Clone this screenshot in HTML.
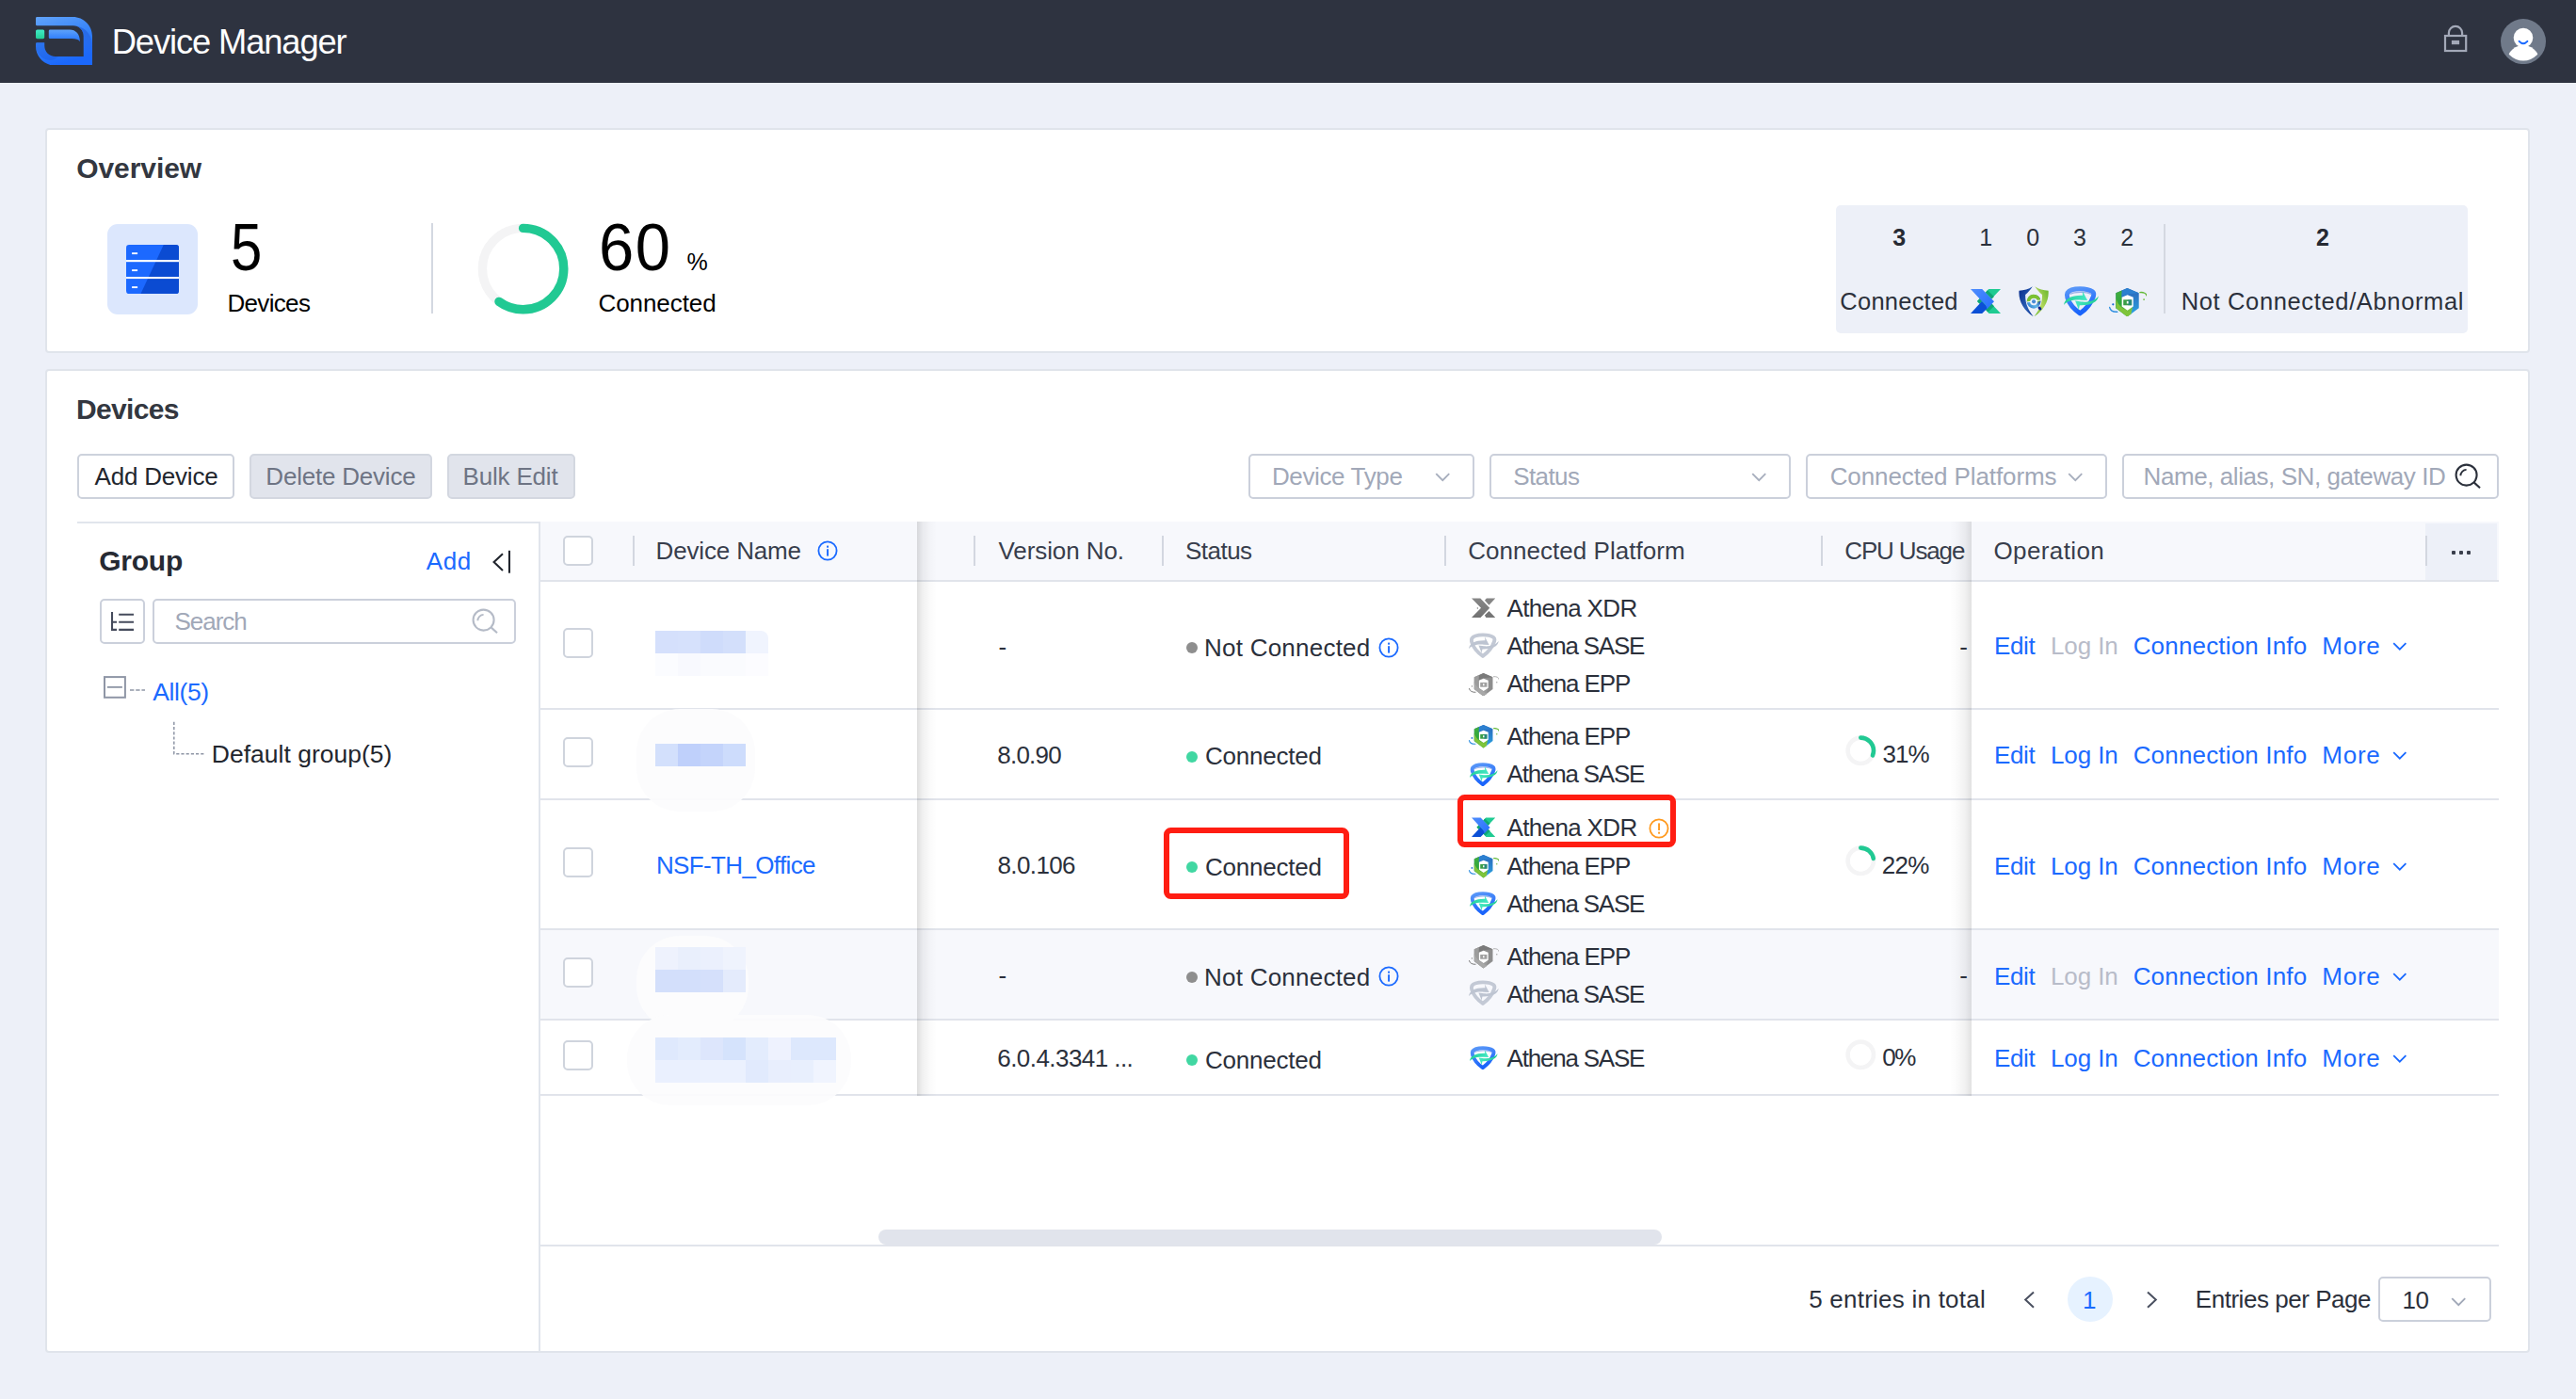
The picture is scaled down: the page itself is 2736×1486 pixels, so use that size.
<!DOCTYPE html><html lang="en"><head><meta charset="utf-8"><title>Device Manager</title><style>
*{box-sizing:border-box;margin:0;padding:0}
html,body{width:2736px;height:1486px;overflow:hidden;background:#edf0f8;font-family:"Liberation Sans",sans-serif;}
.abs,.t,svg.i{position:absolute}
.t{white-space:pre;line-height:1;display:block}
.hdr{left:0;top:0;width:2736px;height:88px;background:#2e3340}
.card{background:#fff;border:2px solid #e0e4eb;border-radius:4px}
.btn{border:2px solid #cdd2dc;border-radius:5px;background:#fff}
.btn.dis{background:#e1e4ec;border-color:#d3d7e0}
.inp{border:2px solid #cbd0db;border-radius:5px;background:#fff}
.cb{width:32px;height:32px;border:2px solid #cfd4dd;border-radius:5px;background:#fff}
.sep{width:2px;height:32px;background:#d3d7e0;top:569px}
.hl{height:2px;background:#e1e4eb}
.row{left:574px;width:2080px}
.dot{width:12.4px;height:12.4px;border-radius:50%}
.blk{height:24px}
</style></head><body>
<svg width="0" height="0" style="position:absolute">
<defs>
<linearGradient id="lgLogo" x1="0" y1="0" x2="0.35" y2="1"><stop offset="0" stop-color="#62a4f9"/><stop offset="0.55" stop-color="#3381fa"/><stop offset="1" stop-color="#1b68fc"/></linearGradient>
<linearGradient id="lgLogo2" x1="0" y1="0" x2="0" y2="1"><stop offset="0" stop-color="#5ea2fb"/><stop offset="1" stop-color="#2273fd"/></linearGradient>
<linearGradient id="lgShade" x1="0" y1="0" x2="0" y2="1"><stop offset="0" stop-color="#1a50cf" stop-opacity=".55"/><stop offset="1" stop-color="#1a50cf" stop-opacity="0"/></linearGradient>
<linearGradient id="lgGreen" x1="0" y1="0" x2="0" y2="1"><stop offset="0" stop-color="#42ebc8"/><stop offset="1" stop-color="#22cf97"/></linearGradient>
<linearGradient id="xdrB" x1="0" y1="0" x2="1" y2="1"><stop offset="0" stop-color="#4f8dfd"/><stop offset="1" stop-color="#256ffe"/></linearGradient>
<linearGradient id="shL" x1="0" y1="0" x2="1" y2="1"><stop offset="0" stop-color="#06298a"/><stop offset="0.6" stop-color="#2a5fb4"/><stop offset="1" stop-color="#0a2f8f"/></linearGradient>
<linearGradient id="shR" x1="1" y1="0" x2="0" y2="1"><stop offset="0" stop-color="#62b428"/><stop offset="0.55" stop-color="#b2d75c"/><stop offset="1" stop-color="#6cb82c"/></linearGradient>
<linearGradient id="eyeB" x1="0" y1="1" x2="1" y2="0"><stop offset="0" stop-color="#2f7fd0"/><stop offset="0.4" stop-color="#64b8e8"/><stop offset="1" stop-color="#08208a"/></linearGradient>
<linearGradient id="saseB" x1="0" y1="0" x2="0.3" y2="1"><stop offset="0" stop-color="#5a98f8"/><stop offset="1" stop-color="#1a64fb"/></linearGradient>
<linearGradient id="saseG" x1="0" y1="0" x2="1" y2="0"><stop offset="0" stop-color="#22cf97"/><stop offset="1" stop-color="#45e8c6"/></linearGradient>
<linearGradient id="saseG2" x1="1" y1="0" x2="0" y2="0"><stop offset="0" stop-color="#1fcb92"/><stop offset="1" stop-color="#45e8c6"/></linearGradient>
<linearGradient id="eppG" x1="0" y1="0" x2="0.6" y2="1"><stop offset="0" stop-color="#46b03c"/><stop offset="0.5" stop-color="#2fa540"/><stop offset="1" stop-color="#84c63b"/></linearGradient>
<linearGradient id="eppB" x1="0" y1="0" x2="0" y2="1"><stop offset="0" stop-color="#2c63b8"/><stop offset="1" stop-color="#2aa8e4"/></linearGradient>
<linearGradient id="xg" x1="0" y1="0" x2="0" y2="1"><stop offset="0" stop-color="#878787"/><stop offset="1" stop-color="#727272"/></linearGradient>
<linearGradient id="eppGy" x1="0" y1="0" x2="0.6" y2="1"><stop offset="0" stop-color="#9a9a9a"/><stop offset="1" stop-color="#8a8a8a"/></linearGradient>

<symbol id="xdr" viewBox="0 0 32 26">
 <path d="M32 0H19.2L7 13.1 19.6 26H32L19.8 13z" fill="#1fcb92"/>
 <path d="M18 1.3L15.9 3.6 22.6 10.4 24.9 7.9zM7 13.1L9.4 15.6 12.4 12.6 9.8 10zM16 21.4L18.4 24.6 25 18.2 22.4 15.6z" fill="#11a676"/>
 <path d="M12 13.1L0 26H12.2L18.4 19.8z" fill="#0b4fd6"/>
 <path d="M0 0H12.2L25 13.3 17.3 21.2C17 18 15 15.6 12 13.1z" fill="url(#xdrB)"/>
</symbol>
<symbol id="xdrg" viewBox="0 0 32 26">
 <path d="M0 0H11.8L24.4 13 12.1 26H0L12.7 13z" fill="url(#xg)"/>
 <path d="M20.2 0.2H32L23.5 9.2 17.7 2.9z" fill="#858585"/>
 <path d="M23.5 17.3L32 26H19.5L17.7 23z" fill="#757575"/>
 <circle cx="8.1" cy="13.3" r="0.9" fill="#7a7a7a"/>
</symbol>

<symbol id="eye" viewBox="0 0 32 33">
 <path d="M14.7 0.2C10.5 3.2 5.5 4.3 0.3 4.8-0.6 16 5.5 26 15.6 32.4 10.2 25.4 6.8 19 7 9 9.8 6.6 12.6 3.8 14.7 0.2z" fill="url(#shL)"/>
 <path d="M17.2 0.2C21.4 3.2 26.4 4.3 31.6 4.8 32.5 16 26.4 26 16.4 32.4 21.8 25.4 25.2 19 25 9 22.2 6.6 19.4 3.8 17.2 0.2z" fill="url(#shR)"/>
 <circle cx="16" cy="16.4" r="5.7" fill="none" stroke="url(#eyeB)" stroke-width="3.4"/>
 <path d="M8.6 16.9A7.4 7.4 0 0 1 23.3 15.2L20.2 17.6A4 4 0 0 0 12 16.4z" fill="#7cc230"/>
 <path d="M8.6 17L23.6 15" stroke="#fff" stroke-width="0.9"/>
 <circle cx="16" cy="16.4" r="2.1" fill="#4a8cd6"/>
 <path d="M21.9 23L22.9 24.3" stroke="#07208c" stroke-width="2.8" stroke-linecap="round"/>
</symbol>

<symbol id="sase" viewBox="0 0 38 32">
 <path d="M17.6 2.6C10.5 2.6 5.6 4.4 3.9 7 3.2 8.4 3.3 10.2 3.9 12.2 5.9 18.6 11.6 25 17.5 29 22.8 25.2 29.2 18.4 31.7 10.8 32.4 8.6 32.3 6.8 30.8 5.7 27.8 3.6 23.4 2.6 17.6 2.6z" fill="none" stroke="url(#saseB)" stroke-width="5" stroke-linejoin="round"/>
 <path d="M6.6 8.4C11 5.6 24.6 5.4 29.4 8.6" fill="none" stroke="#1d4fd0" stroke-width="1.3" opacity=".4"/>
 <path d="M0.2 20C0.2 13.2 9 9.2 20.4 9.6L20 5.2 25.4 15 18.8 14.8C11 14 3.4 15.6 0.2 20z" fill="url(#saseG)"/>
 <path d="M37.2 10.4C36.4 17.4 27.8 20.6 17 20.2L16 25 12.2 15.6 18.8 16.6C27.4 17.2 33.6 15.2 37.2 10.4z" fill="url(#saseG2)"/>
</symbol>
<symbol id="saseg" viewBox="0 0 38 32">
 <path d="M17.6 2.6C10.5 2.6 5.6 4.4 3.9 7 3.2 8.4 3.3 10.2 3.9 12.2 5.9 18.6 11.6 25 17.5 29 22.8 25.2 29.2 18.4 31.7 10.8 32.4 8.6 32.3 6.8 30.8 5.7 27.8 3.6 23.4 2.6 17.6 2.6z" fill="none" stroke="#c3c9d5" stroke-width="4.6" stroke-linejoin="round"/>
 <path d="M0.2 20C0.2 13.2 9 9.2 20.4 9.6L20 5.2 25.4 15 18.8 14.8C11 14 3.4 15.6 0.2 20z" fill="#bdc4d1"/>
 <path d="M37.2 10.4C36.4 17.4 27.8 20.6 17 20.2L16 25 12.2 15.6 18.8 16.6C27.4 17.2 33.6 15.2 37.2 10.4z" fill="#bdc4d1"/>
</symbol>

<symbol id="epp" viewBox="0 0 40 31">
 <path d="M19.2 0L7 5.4V21.4L19.2 30.6 31.6 21.4V5.4z" fill="url(#eppB)"/>
 <path d="M19.2 0L13 2.8 11.6 9.4 19.4 6.6 31.6 5.4z" fill="#2c80d0"/>
 <path d="M13.4 2.6L7 5.4V21.4L19.2 30.6 23.2 27.6 25 19.6 13 9.6z" fill="url(#eppG)"/>
 <path d="M7 11L7.2 21.4 19.2 30.6 23.4 27.4 18.4 23.6C12 21 8.6 15.8 7 11z" fill="#7fc43a"/>
 <path d="M19.4 7.2L13.4 9.8V19.6L19.4 23.8 25.6 19.6V9.8z" fill="#fff"/>
 <rect x="15" y="12.4" width="9" height="6" fill="#3a9e46"/>
 <rect x="20" y="12.4" width="4" height="6" fill="#1f7f8e" opacity=".7"/>
 <rect x="18.6" y="14" width="1.8" height="2.6" fill="#fff"/>
 <path d="M0.3 20.6C1 24 4.6 25.6 8.6 25.4" fill="none" stroke="#2f8fe0" stroke-width="1.3" stroke-linecap="round"/>
 <circle cx="4" cy="17.4" r="1.1" fill="#1565d8"/>
 <path d="M32.8 4.6C36.6 4.2 39.6 5.6 39.8 8" fill="none" stroke="#62b835" stroke-width="1.3" stroke-linecap="round"/>
 <circle cx="37" cy="12.2" r="0.9" fill="#6cbb3a"/>
</symbol>
<symbol id="eppg" viewBox="0 0 40 31">
 <path d="M19.2 0L7 5.4V21.4L19.2 30.6 31.6 21.4V5.4z" fill="#8e8e8e"/>
 <path d="M19.2 0L13 2.8 11.6 9.4 19.4 6.6 31.6 5.4z" fill="#7a7a7a"/>
 <path d="M13.4 2.6L7 5.4V21.4L19.2 30.6 23.2 27.6 25 19.6 13 9.6z" fill="#9c9c9c"/>
 <path d="M7 11L7.2 21.4 19.2 30.6 23.4 27.4 18.4 23.6C12 21 8.6 15.8 7 11z" fill="#a8a8a8"/>
 <path d="M19.4 7.2L13.4 9.8V19.6L19.4 23.8 25.6 19.6V9.8z" fill="#fff"/>
 <rect x="15" y="12.4" width="9" height="6" fill="#a0a0a0"/>
 <rect x="18.6" y="14" width="1.8" height="2.6" fill="#fff"/>
 <path d="M0.3 20.6C1 24 4.6 25.6 8.6 25.4" fill="none" stroke="#6b6b6b" stroke-width="1.1" stroke-linecap="round"/>
 <circle cx="4" cy="17.4" r="0.8" fill="#777"/>
 <path d="M32.8 4.6C36.6 4.2 39.6 5.6 39.8 8" fill="none" stroke="#aaa" stroke-width="1.1" stroke-linecap="round"/>
 <circle cx="37" cy="12.2" r="0.8" fill="#999"/>
</symbol>

<symbol id="info" viewBox="0 0 22 22">
 <circle cx="11" cy="11" r="9.6" fill="none" stroke="#1b6aff" stroke-width="1.8"/>
 <rect x="10.1" y="9.2" width="1.9" height="7.4" fill="#1b6aff"/><rect x="10.1" y="5.6" width="1.9" height="2.1" fill="#1b6aff"/>
</symbol>
<symbol id="warn" viewBox="0 0 22 22">
 <circle cx="11" cy="11" r="9.6" fill="none" stroke="#ff9a1f" stroke-width="1.8"/>
 <rect x="10.1" y="5.4" width="1.9" height="7.6" fill="#ff9a1f"/><rect x="10.1" y="14.6" width="1.9" height="2.1" fill="#ff9a1f"/>
</symbol>
<symbol id="chev" viewBox="0 0 16 10">
 <path d="M1 1.2L8 8.2 15 1.2" fill="none" stroke="currentColor" stroke-width="1.9"/>
</symbol>
<symbol id="srch" viewBox="0 0 28 28">
 <circle cx="12.6" cy="12.6" r="11" fill="none" stroke="currentColor" stroke-width="2.1"/>
 <path d="M20.6 20.4L27 26.2" stroke="currentColor" stroke-width="2.1"/>
 <path d="M6.4 13.2A6.4 6.4 0 0 1 12.6 6.9" fill="none" stroke="currentColor" stroke-width="1.9"/>
</symbol>
</defs></svg>
<header class="abs hdr">
<svg class="i" style="left:38px;top:17.8px" width="60" height="51.6" viewBox="0 0 60 51.6">
<path d="M1.4 0H39.4C50.8 0 60 9.2 60 20.6V50.2Q60 51.6 58.6 51.6H20.3C9.1 51.6 0 42.5 0 31.3V28.6Q0 27.2 1.4 27.2H9.2V30.7C9.2 36.9 14.2 41.9 20.5 41.9H50.75V20.3C50.75 14.2 45.8 9.3 39.7 9.3H1.4Q0 9.3 0 7.9V1.4Q0 0 1.4 0z" fill="url(#lgLogo)"/>
<path d="M50.75 20.3C50.75 14.2 45.8 9.3 39.7 9.3 50 9.6 58.6 16.4 60 28V42H50.75z" fill="url(#lgShade)"/>
<path d="M0 31.3C0 36 3.4 41.4 9 44.6 13.6 46.8 18 47 24 41.9H20.5C14.2 41.9 9.2 36.9 9.2 30.7V27.2H1.4Q0 27.2 0 28.6z" fill="#1a56d8" opacity=".35"/>
<path d="M15.2 13.6H36C42.4 13.6 46.9 18.2 46.9 26.2 45.2 23.8 42.4 23.1 38.4 23.1H15.2Q13.8 23.1 13.8 21.7V15Q13.8 13.6 15.2 13.6z" fill="url(#lgLogo2)"/>
<rect x="0" y="13.4" width="9.2" height="9.8" rx="1.6" fill="url(#lgGreen)"/>
</svg>
<h1 class="t" style="left:118.72px;top:27.17px;font-size:36.3px;color:#ffffff;font-weight:normal;letter-spacing:-1.102px;">Device Manager</h1>
<svg class="i" style="left:2590px;top:22px" width="36" height="38" viewBox="0 0 36 38">
<rect x="7" y="16" width="22.2" height="16" fill="none" stroke="#a3a9b8" stroke-width="2.2"/>
<path d="M10.9 16V13A7.1 7.1 0 0 1 25.1 13V16" fill="none" stroke="#a3a9b8" stroke-width="2.2"/>
<rect x="13.9" y="20.9" width="8.2" height="4.3" fill="#a3a9b8"/></svg>
<svg class="i" style="left:2656px;top:19.8px" width="48" height="48.2" viewBox="0 0 48 48.2">
<defs><clipPath id="avc"><circle cx="24" cy="24.1" r="20.4"/></clipPath></defs>
<circle cx="24" cy="24.1" r="24" fill="#707a8a"/>
<circle cx="24" cy="20.1" r="10.3" fill="#fff"/>
<path d="M18.6 29.1C14 30.4 10.6 33.8 8 38.4L4 46H44L40 38.4C37.4 33.8 34 30.4 29.4 29.1z" fill="#fff" clip-path="url(#avc)"/>
<path d="M19.6 23.9Q24 28.6 28.4 23.9" fill="none" stroke="#1b6aff" stroke-width="2" stroke-linecap="round"/></svg>
</header>
<section class="abs card" style="left:48px;top:136px;width:2639px;height:239px"></section>
<h2 class="t" style="left:81.27px;top:163.85px;font-size:30px;color:#333740;font-weight:bold;letter-spacing:-0.082px;">Overview</h2>
<div class="abs" style="left:114px;top:238px;width:96px;height:96px;border-radius:11px;background:#dce7fd"></div>
<svg class="i" style="left:134px;top:259.8px" width="56" height="52.2" viewBox="0 0 56 52.2">
<defs><clipPath id="srvc"><rect x="0" y="0" width="56" height="52.2" rx="3.2"/></clipPath></defs>
<g clip-path="url(#srvc)"><rect width="56" height="52.2" fill="#1c69ff"/><path d="M39.8 0H56V52.2H15.4z" fill="#0b4bd2"/>
<rect y="16.1" width="56" height="2.1" fill="#fff"/><rect y="34" width="56" height="2.1" fill="#fff"/></g>
<rect x="6.1" y="8.2" width="6" height="1.9" fill="#fff"/><rect x="6.1" y="26.2" width="6" height="1.9" fill="#fff"/><rect x="6.1" y="44.2" width="6" height="1.9" fill="#fff"/></svg>
<span class="t" style="left:244.59px;top:227.62px;font-size:70.5px;color:#000;transform:scaleX(0.85);transform-origin:0 0;">5</span>
<span class="t" style="left:241.39px;top:309.49px;font-size:26px;color:#000;letter-spacing:-0.661px;">Devices</span>
<div class="abs" style="left:458px;top:237px;width:2px;height:96px;background:#d4d8e1"></div>
<svg class="i" style="left:503.30px;top:233.15px" width="105.2" height="105.2" viewBox="-52.6 -52.6 105.2 105.2"><circle r="43.2" fill="none" stroke="#f4f4f5" stroke-width="9.4"/><circle r="43.2" fill="none" stroke="#21c993" stroke-width="9.4" stroke-linecap="round" stroke-dasharray="162.86 271.43" transform="rotate(-90)"/></svg>
<span class="t" style="left:635.71px;top:227.62px;font-size:70.5px;color:#000;letter-spacing:1.500px;transform:scaleX(0.95);transform-origin:0 0;">60</span>
<span class="t" style="left:729.50px;top:265.84px;font-size:25px;color:#000;">%</span>
<span class="t" style="left:635.49px;top:309.29px;font-size:26px;color:#000;letter-spacing:-0.077px;">Connected</span>
<div class="abs" style="left:1950px;top:218px;width:671px;height:135.5px;border-radius:5px;background:#edf0f8"></div>
<span class="t" style="left:2010.35px;top:240.09px;font-size:25px;color:#262a33;font-weight:bold;">3</span>
<span class="t" style="left:2102.22px;top:240.09px;font-size:25px;color:#2b303b;">1</span>
<span class="t" style="left:2152.26px;top:240.09px;font-size:25px;color:#2b303b;">0</span>
<span class="t" style="left:2201.90px;top:240.09px;font-size:25px;color:#2b303b;">3</span>
<span class="t" style="left:2252.32px;top:240.09px;font-size:25px;color:#2b303b;">2</span>
<span class="t" style="left:2459.88px;top:240.09px;font-size:25px;color:#262a33;font-weight:bold;">2</span>
<span class="t" style="left:1954.36px;top:307.66px;font-size:25.5px;color:#2b303b;letter-spacing:0.226px;">Connected</span>
<svg class="i" style="left:2093.00px;top:307.00px;" width="32" height="26"><use href="#xdr"/></svg>
<svg class="i" style="left:2144.00px;top:303.60px;" width="32.2" height="32.8"><use href="#eye"/></svg>
<svg class="i" style="left:2191.60px;top:304.00px;" width="37.6" height="32"><use href="#sase"/></svg>
<svg class="i" style="left:2239.80px;top:305.60px;" width="40.4" height="30.8"><use href="#epp"/></svg>
<div class="abs" style="left:2298px;top:237.5px;width:2px;height:95px;background:#d4d8e1"></div>
<span class="t" style="left:2316.69px;top:307.66px;font-size:25.5px;color:#2b303b;letter-spacing:0.642px;">Not Connected/Abnormal</span>
<section class="abs card" style="left:48px;top:392px;width:2639px;height:1045px"></section>
<h2 class="t" style="left:81.12px;top:420.11px;font-size:30px;color:#333740;font-weight:bold;letter-spacing:-0.687px;">Devices</h2>
<div class="abs btn" style="left:82px;top:482px;width:167px;height:48px"></div>
<span class="t" style="left:100.51px;top:493.49px;font-size:26px;color:#22262e;letter-spacing:-0.200px;">Add Device</span>
<div class="abs btn dis" style="left:265px;top:482px;width:194px;height:48px"></div>
<span class="t" style="left:282.36px;top:493.49px;font-size:26px;color:#6e7484;letter-spacing:-0.213px;">Delete Device</span>
<div class="abs btn dis" style="left:475px;top:482px;width:136px;height:48px"></div>
<span class="t" style="left:491.57px;top:493.49px;font-size:26px;color:#6e7484;letter-spacing:-0.195px;">Bulk Edit</span>
<div class="abs inp" style="left:1326px;top:482px;width:240px;height:48px"></div>
<span class="t" style="left:1350.88px;top:493.49px;font-size:26px;color:#a1a8b8;letter-spacing:-0.362px;">Device Type</span>
<svg class="i" style="left:1524.00px;top:502.30px;color:#a8afbe" width="16.5" height="10"><use href="#chev"/></svg>
<div class="abs inp" style="left:1582px;top:482px;width:319.5px;height:48px"></div>
<span class="t" style="left:1607.28px;top:493.49px;font-size:26px;color:#a1a8b8;letter-spacing:-0.618px;">Status</span>
<svg class="i" style="left:1860.00px;top:502.30px;color:#a8afbe" width="16.5" height="10"><use href="#chev"/></svg>
<div class="abs inp" style="left:1918px;top:482px;width:319.5px;height:48px"></div>
<span class="t" style="left:1943.68px;top:493.49px;font-size:26px;color:#a1a8b8;letter-spacing:-0.110px;">Connected Platforms</span>
<svg class="i" style="left:2196.00px;top:502.30px;color:#a8afbe" width="16.5" height="10"><use href="#chev"/></svg>
<div class="abs inp" style="left:2254px;top:482px;width:400px;height:48px"></div>
<span class="t" style="left:2276.57px;top:493.49px;font-size:26px;color:#a1a8b8;letter-spacing:-0.431px;">Name, alias, SN, gateway ID</span>
<svg class="i" style="left:2606.60px;top:491.90px;color:#2b303b" width="28" height="28"><use href="#srch"/></svg>
<div class="abs" style="left:82px;top:553.5px;width:492px;height:882px;border-top:2px solid #e1e5ec;border-right:2px solid #e1e5ec"></div>
<h3 class="t" style="left:105.27px;top:581.36px;font-size:30px;color:#262a33;font-weight:bold;letter-spacing:-0.243px;">Group</h3>
<span class="t" style="left:452.77px;top:583.49px;font-size:26px;color:#1b6aff;letter-spacing:0.602px;">Add</span>
<svg class="i" style="left:520px;top:583px" width="26" height="28" viewBox="0 0 26 28"><path d="M14 5.2L4.6 14.1 14 23" fill="none" stroke="#22262e" stroke-width="2.1"/><path d="M21 1.8V25.7" stroke="#22262e" stroke-width="2.1"/></svg>
<div class="abs inp" style="left:106px;top:636px;width:48px;height:48px"></div>
<svg class="i" style="left:116px;top:648px" width="28" height="24" viewBox="0 0 28 24"><path d="M3 2V22M3 12.7H8M3 20.9H8M10.2 4.8H26M10.2 12.7H26M10.2 20.9H26" fill="none" stroke="#454b5c" stroke-width="2.1"/></svg>
<div class="abs inp" style="left:162px;top:636px;width:386px;height:48px"></div>
<span class="t" style="left:185.47px;top:647.49px;font-size:26px;color:#a1a8b8;letter-spacing:-1.007px;">Search</span>
<svg class="i" style="left:501.00px;top:646.20px;color:#b5bbc7" width="28" height="28"><use href="#srch"/></svg>
<svg class="i" style="left:108px;top:716px" width="120" height="90" viewBox="0 0 120 90"><rect x="3" y="3.1" width="21.9" height="21.7" fill="#fff" stroke="#8f96a6" stroke-width="2"/><path d="M5.9 13.9H21.9" stroke="#8f96a6" stroke-width="1.8"/><path d="M30 17H46" stroke="#8f96a6" stroke-width="1.6" stroke-dasharray="4.4 1.8"/><path d="M76.8 50.8V84.8H109" fill="none" stroke="#8f96a6" stroke-width="1.5" stroke-dasharray="3.2 2"/></svg>
<span class="t" style="left:162.31px;top:721.97px;font-size:26.5px;color:#1b6aff;letter-spacing:-0.403px;">All(5)</span>
<span class="t" style="left:224.82px;top:788.07px;font-size:26.5px;color:#22262e;letter-spacing:0.005px;">Default group(5)</span>
<div class="abs" style="left:574px;top:554px;width:2080px;height:62px;background:#f7f8fc"></div>
<div class="abs" style="left:574px;top:988px;width:2080px;height:94px;background:#f7f8fc"></div>
<div class="abs hl" style="left:574px;top:616px;width:2080px"></div>
<div class="abs hl" style="left:574px;top:752px;width:2080px"></div>
<div class="abs hl" style="left:574px;top:848px;width:2080px"></div>
<div class="abs hl" style="left:574px;top:986px;width:2080px"></div>
<div class="abs hl" style="left:574px;top:1082px;width:2080px"></div>
<div class="abs hl" style="left:574px;top:1162px;width:2080px"></div>
<div class="abs hl" style="left:574px;top:1321.5px;width:2080px"></div>
<div class="abs" style="left:2576px;top:556px;width:76px;height:60px;background:#edf0f8"></div>
<div class="abs" style="left:2603.9px;top:585px;width:4px;height:4px;border-radius:1px;background:#3a3f4d"></div>
<div class="abs" style="left:2611.9px;top:585px;width:4px;height:4px;border-radius:1px;background:#3a3f4d"></div>
<div class="abs" style="left:2619.9px;top:585px;width:4px;height:4px;border-radius:1px;background:#3a3f4d"></div>
<div class="abs sep" style="left:672px"></div>
<div class="abs sep" style="left:1034px"></div>
<div class="abs sep" style="left:1234px"></div>
<div class="abs sep" style="left:1534px"></div>
<div class="abs sep" style="left:1934px"></div>
<div class="abs sep" style="left:2576px"></div>
<span class="t" style="left:696.57px;top:572.24px;font-size:26px;color:#383e4c;letter-spacing:-0.156px;">Device Name</span>
<svg class="i" style="left:867.80px;top:574.20px;" width="22" height="22"><use href="#info"/></svg>
<span class="t" style="left:1060.41px;top:572.24px;font-size:26px;color:#383e4c;letter-spacing:-0.074px;">Version No.</span>
<span class="t" style="left:1258.94px;top:572.24px;font-size:26px;color:#383e4c;letter-spacing:-0.505px;">Status</span>
<span class="t" style="left:1559.28px;top:572.24px;font-size:26px;color:#383e4c;letter-spacing:0.029px;">Connected Platform</span>
<span class="t" style="left:1959.28px;top:572.24px;font-size:26px;color:#383e4c;letter-spacing:-1.146px;">CPU Usage</span>
<span class="t" style="left:2117.48px;top:572.24px;font-size:26px;color:#383e4c;letter-spacing:0.394px;">Operation</span>
<div class="abs cb" style="left:598px;top:569px"></div>
<div class="abs cb" style="left:598px;top:667px"></div>
<div class="abs cb" style="left:598px;top:783px"></div>
<div class="abs cb" style="left:598px;top:900px"></div>
<div class="abs cb" style="left:598px;top:1017px"></div>
<div class="abs cb" style="left:598px;top:1105px"></div>
<div class="abs" style="left:676px;top:753px;width:126px;height:109px;border-radius:46px;background:rgba(252,252,253,.93)"></div>
<div class="abs" style="left:676px;top:994px;width:119px;height:100px;border-radius:46px;background:rgba(252,252,253,.93)"></div>
<div class="abs" style="left:666px;top:1078px;width:238px;height:96px;border-radius:46px;background:rgba(252,252,253,.93)"></div>
<div class="abs blk" style="left:696px;top:670px;width:24px;background:#d5e0fc"></div><div class="abs blk" style="left:720px;top:670px;width:24px;background:#d6e1fc"></div><div class="abs blk" style="left:744px;top:670px;width:24px;background:#cfdcfb"></div><div class="abs blk" style="left:768px;top:670px;width:24px;background:#d3dffb"></div><div class="abs blk" style="left:792px;top:670px;width:24px;background:#f0f4fe;border-top-right-radius:8px"></div>
<div class="abs blk" style="left:696px;top:694px;width:24px;background:#fbfcff"></div><div class="abs blk" style="left:720px;top:694px;width:24px;background:#f8f9fe"></div><div class="abs blk" style="left:744px;top:694px;width:24px;background:#fafbfe"></div><div class="abs blk" style="left:768px;top:694px;width:24px;background:#fafbfe"></div><div class="abs blk" style="left:792px;top:694px;width:24px;background:#fcfcff"></div>
<div class="abs blk" style="left:696px;top:789.5px;width:24px;background:#d3e0fc"></div><div class="abs blk" style="left:720px;top:789.5px;width:24px;background:#bfd0fb"></div><div class="abs blk" style="left:744px;top:789.5px;width:24px;background:#c4d4fb"></div><div class="abs blk" style="left:768px;top:789.5px;width:24px;background:#cddcfc"></div>
<div class="abs blk" style="left:696px;top:1006px;width:24px;background:#eef2fd"></div><div class="abs blk" style="left:720px;top:1006px;width:24px;background:#e9effc"></div><div class="abs blk" style="left:744px;top:1006px;width:24px;background:#ebf0fd"></div><div class="abs blk" style="left:768px;top:1006px;width:24px;background:#eff3fd"></div>
<div class="abs blk" style="left:696px;top:1030px;width:24px;background:#d3dffb"></div><div class="abs blk" style="left:720px;top:1030px;width:24px;background:#d3dffb"></div><div class="abs blk" style="left:744px;top:1030px;width:24px;background:#d5e0fb"></div><div class="abs blk" style="left:768px;top:1030px;width:24px;background:#e4ebfc"></div>
<div class="abs blk" style="left:696px;top:1102px;width:24px;background:#dfe9fd"></div><div class="abs blk" style="left:720px;top:1102px;width:24px;background:#e3ecfd"></div><div class="abs blk" style="left:744px;top:1102px;width:24px;background:#dde6fc"></div><div class="abs blk" style="left:768px;top:1102px;width:24px;background:#d5e3fc"></div><div class="abs blk" style="left:792px;top:1102px;width:24px;background:#e3ecfd"></div><div class="abs blk" style="left:816px;top:1102px;width:24px;background:#eef2fe"></div><div class="abs blk" style="left:840px;top:1102px;width:24px;background:#dde8fd"></div><div class="abs blk" style="left:864px;top:1102px;width:24px;background:#dde8fd"></div>
<div class="abs blk" style="left:696px;top:1126px;width:24px;background:#eaf0fe"></div><div class="abs blk" style="left:720px;top:1126px;width:24px;background:#eaf0fe"></div><div class="abs blk" style="left:744px;top:1126px;width:24px;background:#ebf1fe"></div><div class="abs blk" style="left:768px;top:1126px;width:24px;background:#ebf1fe"></div><div class="abs blk" style="left:792px;top:1126px;width:24px;background:#e1eafd"></div><div class="abs blk" style="left:816px;top:1126px;width:24px;background:#e8eefd"></div><div class="abs blk" style="left:840px;top:1126px;width:24px;background:#e8effd"></div><div class="abs blk" style="left:864px;top:1126px;width:24px;background:#f0f4fe"></div>
<span class="t" style="left:696.88px;top:906.49px;font-size:26px;color:#1b6aff;letter-spacing:-0.628px;">NSF-TH_Office</span>
<div class="abs" style="left:974px;top:554px;width:21px;height:610px;background:linear-gradient(90deg,rgba(0,0,0,.13),rgba(0,0,0,.055) 30%,rgba(0,0,0,.02) 65%,rgba(0,0,0,0))"></div>
<div class="abs" style="left:2071px;top:554px;width:23px;height:610px;background:linear-gradient(270deg,rgba(0,0,0,.115),rgba(0,0,0,.055) 30%,rgba(0,0,0,.02) 65%,rgba(0,0,0,0))"></div>
<span class="t" style="left:1060.60px;top:673.69px;font-size:26px;color:#2b303b;">-</span>
<span class="t" style="left:1059.35px;top:788.99px;font-size:26px;color:#2b303b;letter-spacing:-0.788px;">8.0.90</span>
<span class="t" style="left:1059.39px;top:906.49px;font-size:26px;color:#2b303b;letter-spacing:-0.591px;">8.0.106</span>
<span class="t" style="left:1060.60px;top:1022.69px;font-size:26px;color:#2b303b;">-</span>
<span class="t" style="left:1059.31px;top:1110.99px;font-size:26px;color:#2b303b;letter-spacing:-0.561px;">6.0.4.3341 ...</span>
<div class="abs dot" style="left:1259.6px;top:681.80px;background:#8e8e8e"></div><span class="t" style="left:1279.10px;top:675.24px;font-size:26px;color:#2b303b;letter-spacing:0.225px;">Not Connected</span><svg class="i" style="left:1463.70px;top:676.65px;" width="22" height="22"><use href="#info"/></svg>
<div class="abs dot" style="left:1259.6px;top:797.80px;background:#41d7a2"></div><span class="t" style="left:1280.08px;top:790.24px;font-size:26px;color:#2b303b;letter-spacing:-0.230px;">Connected</span>
<div class="abs dot" style="left:1259.6px;top:914.80px;background:#41d7a2"></div><span class="t" style="left:1280.08px;top:907.74px;font-size:26px;color:#2b303b;letter-spacing:-0.230px;">Connected</span>
<div class="abs dot" style="left:1259.6px;top:1031.80px;background:#8e8e8e"></div><span class="t" style="left:1279.10px;top:1024.74px;font-size:26px;color:#2b303b;letter-spacing:0.225px;">Not Connected</span><svg class="i" style="left:1463.70px;top:1026.15px;" width="22" height="22"><use href="#info"/></svg>
<div class="abs dot" style="left:1259.6px;top:1119.55px;background:#41d7a2"></div><span class="t" style="left:1280.08px;top:1112.74px;font-size:26px;color:#2b303b;letter-spacing:-0.230px;">Connected</span>
<svg class="i" style="left:1563.00px;top:634.80px;" width="25.2" height="21.4"><use href="#xdrg"/></svg><span class="t" style="left:1600.51px;top:633.49px;font-size:26px;color:#2b303b;letter-spacing:-0.644px;">Athena XDR</span>
<svg class="i" style="left:1559.80px;top:671.80px;" width="32.4" height="27.6"><use href="#saseg"/></svg><span class="t" style="left:1600.51px;top:673.49px;font-size:26px;color:#2b303b;letter-spacing:-1.204px;">Athena SASE</span>
<svg class="i" style="left:1559.80px;top:714.70px;" width="32.4" height="24.8"><use href="#eppg"/></svg><span class="t" style="left:1600.51px;top:713.49px;font-size:26px;color:#2b303b;letter-spacing:-1.083px;">Athena EPP</span>
<svg class="i" style="left:1559.80px;top:770.20px;" width="32.4" height="24.8"><use href="#epp"/></svg><span class="t" style="left:1600.51px;top:768.99px;font-size:26px;color:#2b303b;letter-spacing:-1.083px;">Athena EPP</span>
<svg class="i" style="left:1561.00px;top:809.55px;" width="30.2" height="25.6"><use href="#sase"/></svg><span class="t" style="left:1600.51px;top:809.24px;font-size:26px;color:#2b303b;letter-spacing:-1.204px;">Athena SASE</span>
<svg class="i" style="left:1563.00px;top:867.80px;" width="25.2" height="21.4"><use href="#xdr"/></svg><span class="t" style="left:1600.51px;top:866.49px;font-size:26px;color:#2b303b;letter-spacing:-0.644px;">Athena XDR</span>
<svg class="i" style="left:1750.60px;top:869.40px;" width="22" height="22"><use href="#warn"/></svg>
<svg class="i" style="left:1559.80px;top:907.95px;" width="32.4" height="24.8"><use href="#epp"/></svg><span class="t" style="left:1600.51px;top:906.74px;font-size:26px;color:#2b303b;letter-spacing:-1.083px;">Athena EPP</span>
<svg class="i" style="left:1561.00px;top:947.05px;" width="30.2" height="25.6"><use href="#sase"/></svg><span class="t" style="left:1600.51px;top:946.74px;font-size:26px;color:#2b303b;letter-spacing:-1.204px;">Athena SASE</span>
<svg class="i" style="left:1559.80px;top:1003.95px;" width="32.4" height="24.8"><use href="#eppg"/></svg><span class="t" style="left:1600.51px;top:1002.74px;font-size:26px;color:#2b303b;letter-spacing:-1.083px;">Athena EPP</span>
<svg class="i" style="left:1559.80px;top:1041.05px;" width="32.4" height="27.6"><use href="#saseg"/></svg><span class="t" style="left:1600.51px;top:1042.74px;font-size:26px;color:#2b303b;letter-spacing:-1.204px;">Athena SASE</span>
<svg class="i" style="left:1561.00px;top:1111.30px;" width="30.2" height="25.6"><use href="#sase"/></svg><span class="t" style="left:1600.51px;top:1110.99px;font-size:26px;color:#2b303b;letter-spacing:-1.204px;">Athena SASE</span>
<div class="abs" style="left:1548.4px;top:844.4px;width:232px;height:55.2px;border:6.2px solid #ff1d12;border-radius:7.5px"></div>
<div class="abs" style="left:1236.4px;top:878.5px;width:196.2px;height:76.6px;border:6.2px solid #ff1d12;border-radius:7.5px"></div>
<span class="t" style="left:2081.33px;top:673.69px;font-size:26px;color:#2b303b;">-</span>
<svg class="i" style="left:1957.70px;top:779.10px" width="36.6" height="36.6" viewBox="-18.3 -18.3 36.6 36.6"><circle r="13.7" fill="none" stroke="#f4f4f5" stroke-width="4.6"/><circle r="13.7" fill="none" stroke="#21c993" stroke-width="4.6" stroke-linecap="round" stroke-dasharray="26.68 86.08" transform="rotate(-90)"/></svg>
<span class="t" style="left:1999.62px;top:788.49px;font-size:26px;color:#2b303b;letter-spacing:-1.068px;">31%</span>
<svg class="i" style="left:1957.70px;top:896.30px" width="36.6" height="36.6" viewBox="-18.3 -18.3 36.6 36.6"><circle r="13.7" fill="none" stroke="#f4f4f5" stroke-width="4.6"/><circle r="13.7" fill="none" stroke="#21c993" stroke-width="4.6" stroke-linecap="round" stroke-dasharray="18.94 86.08" transform="rotate(-90)"/></svg>
<span class="t" style="left:1998.85px;top:905.79px;font-size:26px;color:#2b303b;letter-spacing:-0.733px;">22%</span>
<span class="t" style="left:2081.33px;top:1022.69px;font-size:26px;color:#2b303b;">-</span>
<svg class="i" style="left:1957.70px;top:1101.60px" width="36.6" height="36.6" viewBox="-18.3 -18.3 36.6 36.6"><circle r="13.7" fill="none" stroke="#f4f4f5" stroke-width="4.6"/></svg>
<span class="t" style="left:1999.29px;top:1109.79px;font-size:26px;color:#2b303b;letter-spacing:-1.558px;">0%</span>
<span class="t" style="left:2117.88px;top:673.24px;font-size:26px;color:#1b6aff;letter-spacing:-0.325px;">Edit</span><span class="t" style="left:2177.88px;top:673.24px;font-size:26px;color:#b8bcc9;letter-spacing:-0.075px;">Log In</span><span class="t" style="left:2265.68px;top:673.24px;font-size:26px;color:#1b6aff;letter-spacing:0.169px;">Connection Info</span><span class="t" style="left:2466.30px;top:673.24px;font-size:26px;color:#1b6aff;letter-spacing:0.742px;">More</span><svg class="i" style="left:2540.50px;top:682.05px;color:#1b6aff" width="15.6" height="9.4"><use href="#chev"/></svg>
<span class="t" style="left:2117.88px;top:789.24px;font-size:26px;color:#1b6aff;letter-spacing:-0.325px;">Edit</span><span class="t" style="left:2177.88px;top:789.24px;font-size:26px;color:#1b6aff;letter-spacing:-0.075px;">Log In</span><span class="t" style="left:2265.68px;top:789.24px;font-size:26px;color:#1b6aff;letter-spacing:0.169px;">Connection Info</span><span class="t" style="left:2466.30px;top:789.24px;font-size:26px;color:#1b6aff;letter-spacing:0.742px;">More</span><svg class="i" style="left:2540.50px;top:798.05px;color:#1b6aff" width="15.6" height="9.4"><use href="#chev"/></svg>
<span class="t" style="left:2117.88px;top:906.79px;font-size:26px;color:#1b6aff;letter-spacing:-0.325px;">Edit</span><span class="t" style="left:2177.88px;top:906.79px;font-size:26px;color:#1b6aff;letter-spacing:-0.075px;">Log In</span><span class="t" style="left:2265.68px;top:906.79px;font-size:26px;color:#1b6aff;letter-spacing:0.169px;">Connection Info</span><span class="t" style="left:2466.30px;top:906.79px;font-size:26px;color:#1b6aff;letter-spacing:0.742px;">More</span><svg class="i" style="left:2540.50px;top:915.60px;color:#1b6aff" width="15.6" height="9.4"><use href="#chev"/></svg>
<span class="t" style="left:2117.88px;top:1023.79px;font-size:26px;color:#1b6aff;letter-spacing:-0.325px;">Edit</span><span class="t" style="left:2177.88px;top:1023.79px;font-size:26px;color:#b8bcc9;letter-spacing:-0.075px;">Log In</span><span class="t" style="left:2265.68px;top:1023.79px;font-size:26px;color:#1b6aff;letter-spacing:0.169px;">Connection Info</span><span class="t" style="left:2466.30px;top:1023.79px;font-size:26px;color:#1b6aff;letter-spacing:0.742px;">More</span><svg class="i" style="left:2540.50px;top:1032.60px;color:#1b6aff" width="15.6" height="9.4"><use href="#chev"/></svg>
<span class="t" style="left:2117.88px;top:1111.49px;font-size:26px;color:#1b6aff;letter-spacing:-0.325px;">Edit</span><span class="t" style="left:2177.88px;top:1111.49px;font-size:26px;color:#1b6aff;letter-spacing:-0.075px;">Log In</span><span class="t" style="left:2265.68px;top:1111.49px;font-size:26px;color:#1b6aff;letter-spacing:0.169px;">Connection Info</span><span class="t" style="left:2466.30px;top:1111.49px;font-size:26px;color:#1b6aff;letter-spacing:0.742px;">More</span><svg class="i" style="left:2540.50px;top:1120.30px;color:#1b6aff" width="15.6" height="9.4"><use href="#chev"/></svg>
<div class="abs" style="left:933px;top:1305.5px;width:832px;height:16.5px;border-radius:9px;background:#e1e4ec"></div>
<span class="t" style="left:1921.21px;top:1367.49px;font-size:26px;color:#2b303b;letter-spacing:0.234px;">5 entries in total</span>
<svg class="i" style="left:2148px;top:1370px" width="14" height="21" viewBox="0 0 14 21"><path d="M12 2.4L3.2 10.6 12 18.8" fill="none" stroke="#4a5060" stroke-width="2"/></svg>
<div class="abs" style="left:2196px;top:1356px;width:48px;height:48px;border-radius:50%;background:#e6f2ff"></div>
<span class="t" style="left:2212.09px;top:1367.89px;font-size:26px;color:#1b6aff;">1</span>
<svg class="i" style="left:2279px;top:1370px" width="14" height="21" viewBox="0 0 14 21"><path d="M2 2.4L10.8 10.6 2 18.8" fill="none" stroke="#4a5060" stroke-width="2"/></svg>
<span class="t" style="left:2331.80px;top:1367.49px;font-size:26px;color:#2b303b;letter-spacing:-0.465px;">Entries per Page</span>
<div class="abs inp" style="left:2526px;top:1356px;width:119.5px;height:48px"></div>
<span class="t" style="left:2551.47px;top:1367.89px;font-size:26px;color:#2b303b;letter-spacing:-0.516px;">10</span>
<svg class="i" style="left:2603.40px;top:1377.60px;color:#a1a8b8" width="16.5" height="10"><use href="#chev"/></svg>
</body></html>
